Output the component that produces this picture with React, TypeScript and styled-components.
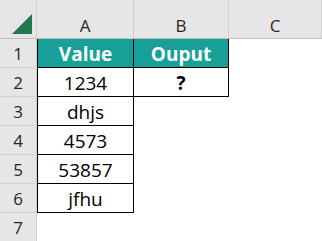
import React from 'react';
import styled, { createGlobalStyle } from 'styled-components';

const GlobalStyle = createGlobalStyle`
  html, body {
    margin: 0;
    padding: 0;
    background: #ffffff;
  }
  body {
    font-family: 'Open Sans', 'Liberation Sans', sans-serif;
  }
`;

const Sheet = styled.div`
  display: grid;
  grid-template-columns: 37px 97px 95px 1fr;
  grid-template-rows: 39px repeat(7, 29px);
  width: 322px;
  height: 241px;
  overflow: hidden;
  background: #ffffff;
`;

const Corner = styled.div`
  position: relative;
  background: #e6e6e6;
  border-right: 1px solid #cfcfcf;
  border-bottom: 1px solid #bdbdbd;
  box-sizing: border-box;
`;

const SelectAll = styled.svg`
  position: absolute;
  right: 3px;
  bottom: 3px;
`;

const ColHead = styled.div`
  display: flex;
  align-items: flex-end;
  justify-content: center;
  padding-bottom: 4px;
  box-sizing: border-box;
  background: #e6e6e6;
  border-right: 1px solid #cfcfcf;
  border-bottom: 1px solid #bdbdbd;
  color: #262626;
  font-size: 17px;
  line-height: 1;
`;

const RowHead = styled.div`
  display: flex;
  align-items: center;
  justify-content: center;
  box-sizing: border-box;
  background: #e6e6e6;
  border-right: 1px solid #cfcfcf;
  border-bottom: 1px solid #d2d2d2;
  color: #262626;
  font-size: 17px;
`;

const Cell = styled.div<{ $head?: boolean; $boxed?: boolean; $first?: boolean }>`
  display: flex;
  align-items: center;
  justify-content: center;
  box-sizing: border-box;
  font-size: 19px;
  padding-top: 1px;
  color: ${(p) => (p.$head ? '#ffffff' : '#000000')};
  font-weight: ${(p) => (p.$head ? 700 : 400)};
  background: ${(p) => (p.$head ? '#17a098' : '#ffffff')};
  border-right: ${(p) => (p.$boxed ? '1px solid #000' : 'none')};
  border-bottom: ${(p) => (p.$boxed ? '1px solid #000' : 'none')};
  border-left: ${(p) => (p.$boxed && p.$first ? '1px solid #000' : 'none')};
`;

const Mark = styled.span`
  font-weight: 700;
`;

const values = ['1234', 'dhjs', '4573', '53857', 'jfhu'];

export default function App() {
  return (
    <>
      <GlobalStyle />
      <Sheet>
        <Corner>
          <SelectAll width="22" height="22" viewBox="0 0 22 22">
            <polygon points="1,21 21,21 21,1" fill="#217a4f" />
          </SelectAll>
        </Corner>
        <ColHead>A</ColHead>
        <ColHead>B</ColHead>
        <ColHead>C</ColHead>

        <RowHead>1</RowHead>
        <Cell $head $boxed $first>Value</Cell>
        <Cell $head $boxed>Ouput</Cell>
        <Cell />

        {values.map((v, i) => (
          <React.Fragment key={v}>
            <RowHead>{i + 2}</RowHead>
            <Cell $boxed $first>{v}</Cell>
            {i === 0 ? (
              <Cell $boxed>
                <Mark>?</Mark>
              </Cell>
            ) : (
              <Cell />
            )}
            <Cell />
          </React.Fragment>
        ))}

        <RowHead>7</RowHead>
        <Cell />
        <Cell />
        <Cell />
      </Sheet>
    </>
  );
}
